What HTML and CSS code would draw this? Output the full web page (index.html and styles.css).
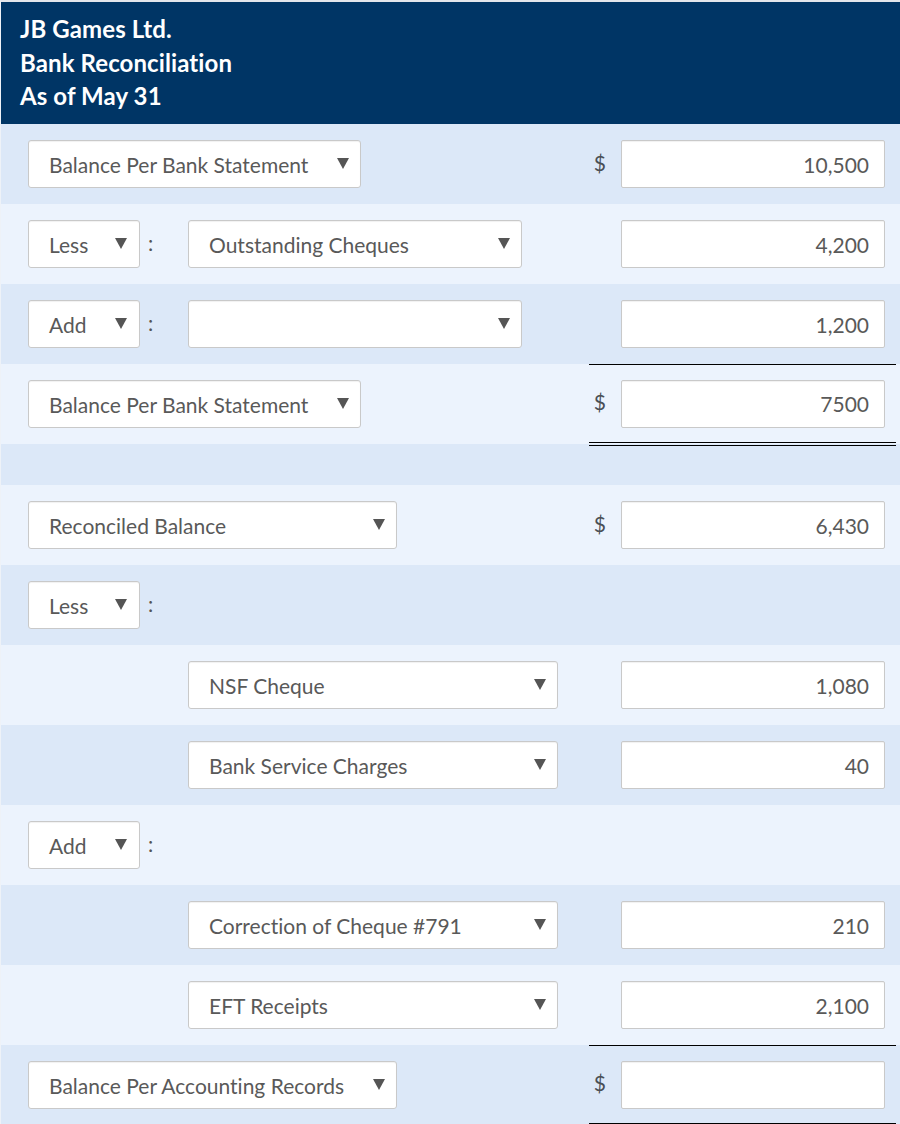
FILE: index.html
```html
<!DOCTYPE html>
<html>
<head>
<meta charset="utf-8">
<link rel="stylesheet" href="styles.css">
</head>
<body>
<div class="sheet">
  <header class="head">
    <div>JB Games Ltd.</div>
    <div>Bank Reconciliation</div>
    <div>As of May 31</div>
  </header>

  <div class="row dark">
    <div class="left">
      <div class="sel w333"><span>Balance Per Bank Statement</span><svg class="arr" viewBox="0 0 12 11"><polygon points="0,0 12,0 6,11"/></svg></div>
    </div>
    <div class="amt"><span class="cur">$</span><div class="inp">10,500</div></div>
  </div>

  <div class="row light">
    <div class="left">
      <div class="sel op"><span>Less</span><svg class="arr" viewBox="0 0 12 11"><polygon points="0,0 12,0 6,11"/></svg></div>
      <span class="colon">:</span>
      <div class="sel w334"><span>Outstanding Cheques</span><svg class="arr" viewBox="0 0 12 11"><polygon points="0,0 12,0 6,11"/></svg></div>
    </div>
    <div class="amt"><span class="cur"></span><div class="inp">4,200</div></div>
  </div>

  <div class="row dark">
    <div class="left">
      <div class="sel op"><span>Add</span><svg class="arr" viewBox="0 0 12 11"><polygon points="0,0 12,0 6,11"/></svg></div>
      <span class="colon">:</span>
      <div class="sel w334"><span></span><svg class="arr" viewBox="0 0 12 11"><polygon points="0,0 12,0 6,11"/></svg></div>
    </div>
    <div class="amt"><span class="cur"></span><div class="inp">1,200</div></div>
  </div>

  <div class="row light">
    <div class="left">
      <div class="sel w333"><span>Balance Per Bank Statement</span><svg class="arr" viewBox="0 0 12 11"><polygon points="0,0 12,0 6,11"/></svg></div>
    </div>
    <div class="amt total"><span class="cur">$</span><div class="inp">7500</div></div>
  </div>

  <div class="row dark spacer"></div>

  <div class="row light">
    <div class="left">
      <div class="sel w369"><span>Reconciled Balance</span><svg class="arr" viewBox="0 0 12 11"><polygon points="0,0 12,0 6,11"/></svg></div>
    </div>
    <div class="amt"><span class="cur">$</span><div class="inp">6,430</div></div>
  </div>

  <div class="row dark">
    <div class="left">
      <div class="sel op"><span>Less</span><svg class="arr" viewBox="0 0 12 11"><polygon points="0,0 12,0 6,11"/></svg></div>
      <span class="colon">:</span>
    </div>
  </div>

  <div class="row light">
    <div class="left indent">
      <div class="sel w370"><span>NSF Cheque</span><svg class="arr" viewBox="0 0 12 11"><polygon points="0,0 12,0 6,11"/></svg></div>
    </div>
    <div class="amt"><span class="cur"></span><div class="inp">1,080</div></div>
  </div>

  <div class="row dark">
    <div class="left indent">
      <div class="sel w370"><span>Bank Service Charges</span><svg class="arr" viewBox="0 0 12 11"><polygon points="0,0 12,0 6,11"/></svg></div>
    </div>
    <div class="amt"><span class="cur"></span><div class="inp">40</div></div>
  </div>

  <div class="row light">
    <div class="left">
      <div class="sel op"><span>Add</span><svg class="arr" viewBox="0 0 12 11"><polygon points="0,0 12,0 6,11"/></svg></div>
      <span class="colon">:</span>
    </div>
  </div>

  <div class="row dark">
    <div class="left indent">
      <div class="sel w370"><span>Correction of Cheque #791</span><svg class="arr" viewBox="0 0 12 11"><polygon points="0,0 12,0 6,11"/></svg></div>
    </div>
    <div class="amt"><span class="cur"></span><div class="inp">210</div></div>
  </div>

  <div class="row light">
    <div class="left indent">
      <div class="sel w370"><span>EFT Receipts</span><svg class="arr" viewBox="0 0 12 11"><polygon points="0,0 12,0 6,11"/></svg></div>
    </div>
    <div class="amt"><span class="cur"></span><div class="inp">2,100</div></div>
  </div>

  <div class="row dark">
    <div class="left">
      <div class="sel w369"><span>Balance Per Accounting Records</span><svg class="arr" viewBox="0 0 12 11"><polygon points="0,0 12,0 6,11"/></svg></div>
    </div>
    <div class="amt final"><span class="cur">$</span><div class="inp"></div></div>
  </div>
</div>
</body>
</html>
```

FILE: styles.css
```css
* { box-sizing: border-box; }

html, body {
  margin: 0;
  padding: 0;
  background: #ffffff;
}

body {
  font-family: Lato, "Open Sans", sans-serif;
  color: #555555;
  font-variant-ligatures: none;
}

.sheet {
  width: 900px;
  border-top: 2px solid #e3e6eb;
  border-left: 1px solid #eef2f8;
}

.head {
  background: #003565;
  color: #ffffff;
  font-weight: 700;
  font-size: 24px;
  line-height: 33.5px;
  padding: 10px 20px 0 19px;
  height: 122px;
  letter-spacing: 0.1px;
}

.row {
  display: flex;
  align-items: center;
  height: 80px;
  padding-left: 27px;
  padding-right: 4px;
}

.row.dark { background: #dce8f8; }
.row.light { background: #ecf3fd; }
.row.spacer { height: 41px; }

.left {
  flex: 1;
  display: flex;
  align-items: center;
}

.left.indent { padding-left: 160px; }

.sel {
  height: 48px;
  background: #ffffff;
  border: 1px solid #c9c9c9;
  border-radius: 3px;
  box-shadow: inset 0 1px 1px rgba(0, 0, 0, 0.06);
  display: flex;
  align-items: center;
  justify-content: space-between;
  padding: 0 11px 0 20px;
  font-size: 21px;
  color: #595959;
}

.sel.op { width: 112px; padding-right: 12px; }
.sel.w333 { width: 333px; }
.sel.w334 { width: 334px; }
.sel.w369 { width: 369px; }
.sel.w370 { width: 370px; }

.arr {
  width: 12px;
  height: 11px;
  fill: #555555;
  margin-top: -1px;
  flex: none;
}

.colon {
  width: 48px;
  padding-left: 8px;
  font-size: 21px;
  color: #555555;
  margin-top: -4px;
}

.amt {
  width: 307px;
  align-self: stretch;
  display: flex;
  align-items: center;
}

.amt.total {
  border-top: 1px solid #000000;
  border-bottom: 4px double #000000;
  margin-bottom: -2px;
}

.amt.final {
  align-self: flex-start;
  height: 79px;
  border-top: 1px solid #000000;
  border-bottom: 1px solid #000000;
}

.cur {
  width: 32px;
  padding-right: 15px;
  text-align: right;
  font-size: 21px;
  color: #4a4f55;
  margin-top: -4px;
}

.inp {
  width: 264px;
  height: 48px;
  background: #ffffff;
  border: 1px solid #c9c9c9;
  border-radius: 2px;
  box-shadow: inset 0 1px 1px rgba(0, 0, 0, 0.06);
  display: flex;
  align-items: center;
  justify-content: flex-end;
  padding-right: 15px;
  font-size: 21px;
  color: #595959;
}
```
